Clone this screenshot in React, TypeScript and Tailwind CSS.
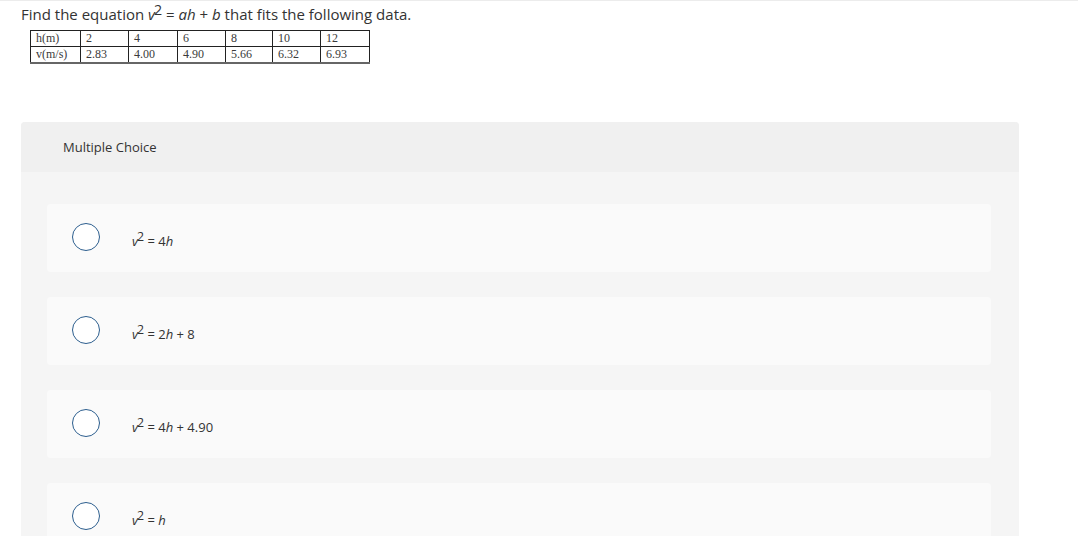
const hRow = ["h(m)", "2", "4", "6", "8", "10", "12"];
const vRow = ["v(m/s)", "2.83", "4.00", "4.90", "5.66", "6.32", "6.93"];
const widths = ["w-[50px]", "w-[48px]", "w-[49px]", "w-[48px]", "w-[47px]", "w-[48px]", "w-[49px]"];

function V2() {
  return (
    <span>
      <span className="italic">v</span>
      <span className="relative -top-[5px] text-[0.95em] -ml-[1px]">2</span>
    </span>
  );
}

const options = [
  <>
    <V2 /> = 4<span className="italic">h</span>
  </>,
  <>
    <V2 /> = 2<span className="italic">h</span> + 8
  </>,
  <>
    <V2 /> = 4<span className="italic">h</span> + 4.90
  </>,
  <>
    <V2 /> = <span className="italic">h</span>
  </>,
];

export default function App() {
  return (
    <div className="h-[536px] overflow-hidden bg-white border-t border-[#ececec] font-['Open_Sans',sans-serif] text-[#333]">
      <p className="pl-[21px] pt-[2px] text-[15px] leading-[22px]">
        Find the equation <V2 /> = <span className="italic">ah</span> + <span className="italic">b</span> that fits the following data.
      </p>

      <table className="ml-[30px] mt-[4px] border-collapse font-['Liberation_Serif',serif] text-[12px] leading-[15px] text-[#3a3a3a] border-b-2 border-b-[#666]">
        <tbody>
          {[hRow, vRow].map((row, r) => (
            <tr key={r}>
              {row.map((cell, i) => (
                <td key={i} className={`${widths[i]} border border-[#222] pl-[5px] pr-[3px] py-0 h-[16px]`}>
                  {cell}
                </td>
              ))}
            </tr>
          ))}
        </tbody>
      </table>

      <div className="ml-[21px] mt-[58px] w-[998px] rounded-t-[4px] bg-[#f5f5f5]">
        <div className="h-[50px] rounded-t-[4px] bg-[#f0f0f0] pl-[42px] pt-[2px] flex items-center text-[13px] text-[#333]">
          Multiple Choice
        </div>
        <div className="pl-[26px] pr-[28px] pt-[32px] flex flex-col gap-[25px] pb-[20px]">
          {options.map((o, i) => (
            <div key={i} className="h-[68px] rounded-[4px] bg-[#fafafa] flex items-center pl-[25px]">
              <span className="w-[28px] h-[28px] rounded-full border-[1.5px] border-[#2c5e8e] bg-white shrink-0 -mt-[3px]" />
              <span className="ml-[32px] mt-[8px] text-[13px] text-[#333]">{o}</span>
            </div>
          ))}
        </div>
      </div>
    </div>
  );
}
